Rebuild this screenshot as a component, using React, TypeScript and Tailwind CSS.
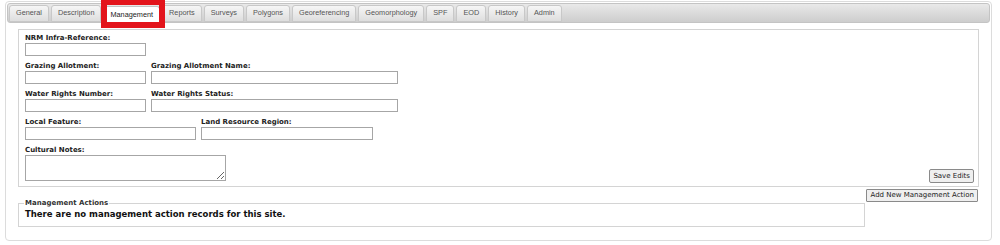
import React from 'react'

const tabs = [
  'General',
  'Description',
  'Management',
  'Reports',
  'Surveys',
  'Polygons',
  'Georeferencing',
  'Geomorphology',
  'SPF',
  'EOD',
  'History',
  'Admin',
]

const verdana = "font-['DejaVu_Sans',Verdana,sans-serif]"

const Field = ({ label, width }: { label: string; width: string }) => (
  <div className="flex flex-col">
    <label className={`${verdana} h-[10px] text-[7px] leading-[10px] font-bold text-[#222] whitespace-nowrap`}>
      {label}
    </label>
    <input
      type="text"
      className={`${width} h-[13px] border border-[#a6a6a6] bg-white outline-none`}
    />
  </div>
)

const App = () => {
  return (
    <div className="relative w-[1000px] h-[245px] bg-white overflow-hidden">
      <div className="ml-[5px] mt-[1px] w-[987px] h-[240px] border border-[#dcdcdc] rounded-[4px] p-[1px]">
        {/* tab strip */}
        <div className="h-[20px] border border-[#c4c4c4] rounded-[3px] bg-gradient-to-b from-[#e9e9e9] to-[#cdcdcd] flex items-end gap-[2px] pl-[1px]">
          {tabs.map((tab) => {
            const active = tab === 'Management'
            return (
              <div
                key={tab}
                className={
                  active
                    ? "h-[17px] -mb-[1px] px-[6px] flex items-center border border-b-0 border-[#c4c4c4] rounded-t-[3px] bg-white text-[#222] text-[7.3px] font-['Liberation_Sans',Arial,sans-serif]"
                    : "h-[17px] px-[6px] flex items-center border border-[#c8c8c8] rounded-t-[3px] bg-gradient-to-b from-[#f6f6f6] to-[#dedede] text-[#555] text-[7.3px] font-['Liberation_Sans',Arial,sans-serif]"
                }
              >
                {tab}
              </div>
            )
          })}
        </div>

        {/* edit form */}
        <div className="ml-[11px] mt-[6px] w-[961px] border border-[#d4d4d4] pt-[3px] pl-[6px] pr-[4px] pb-[5px] flex flex-col gap-[5px]">
          <div className="flex gap-[5px]">
            <Field label="NRM Infra-Reference:" width="w-[121px]" />
          </div>
          <div className="flex gap-[5px]">
            <Field label="Grazing Allotment:" width="w-[121px]" />
            <Field label="Grazing Allotment Name:" width="w-[247px]" />
          </div>
          <div className="flex gap-[5px]">
            <Field label="Water Rights Number:" width="w-[121px]" />
            <Field label="Water Rights Status:" width="w-[247px]" />
          </div>
          <div className="flex gap-[5px]">
            <Field label="Local Feature:" width="w-[171px]" />
            <Field label="Land Resource Region:" width="w-[172px]" />
          </div>
          <div className="flex items-end justify-between">
            <div className="flex flex-col">
              <label className={`${verdana} h-[10px] text-[7px] leading-[10px] font-bold text-[#222]`}>
                Cultural Notes:
              </label>
              <textarea className="w-[201px] h-[26px] border border-[#a6a6a6] bg-white outline-none" />
            </div>
            <button
              className={`${verdana} -mb-[2px] h-[14px] px-[3px] text-[7px] leading-none text-[#222] bg-[#efefef] border border-[#8a8a8a] rounded-[2px]`}
            >
              Save Edits
            </button>
          </div>
        </div>

        <div className="flex justify-end pr-[12px] mt-[2px]">
          <button
            className={`${verdana} h-[13px] px-[3px] text-[7px] leading-none text-[#222] bg-[#efefef] border border-[#8a8a8a] rounded-[1px]`}
          >
            Add New Management Action
          </button>
        </div>

        <fieldset className="ml-[11px] -mt-[3px] w-[847px] border border-[#d4d4d4] px-[6px] pb-[6px]">
          <legend className={`${verdana} ml-[-1px] px-[1px] text-[7px] leading-[9px] font-bold text-[#333]`}>
            Management Actions
          </legend>
          <p className={`${verdana} text-[8.5px] leading-[12px] font-bold text-[#111]`}>
            There are no management action records for this site.
          </p>
        </fieldset>
      </div>

      {/* highlight around the selected tab */}
      <div className="absolute left-[101px] top-0 w-[64px] h-[28px] border-[6px] border-t-[5px] border-[#e3141b]" />
    </div>
  )
}

export default App
